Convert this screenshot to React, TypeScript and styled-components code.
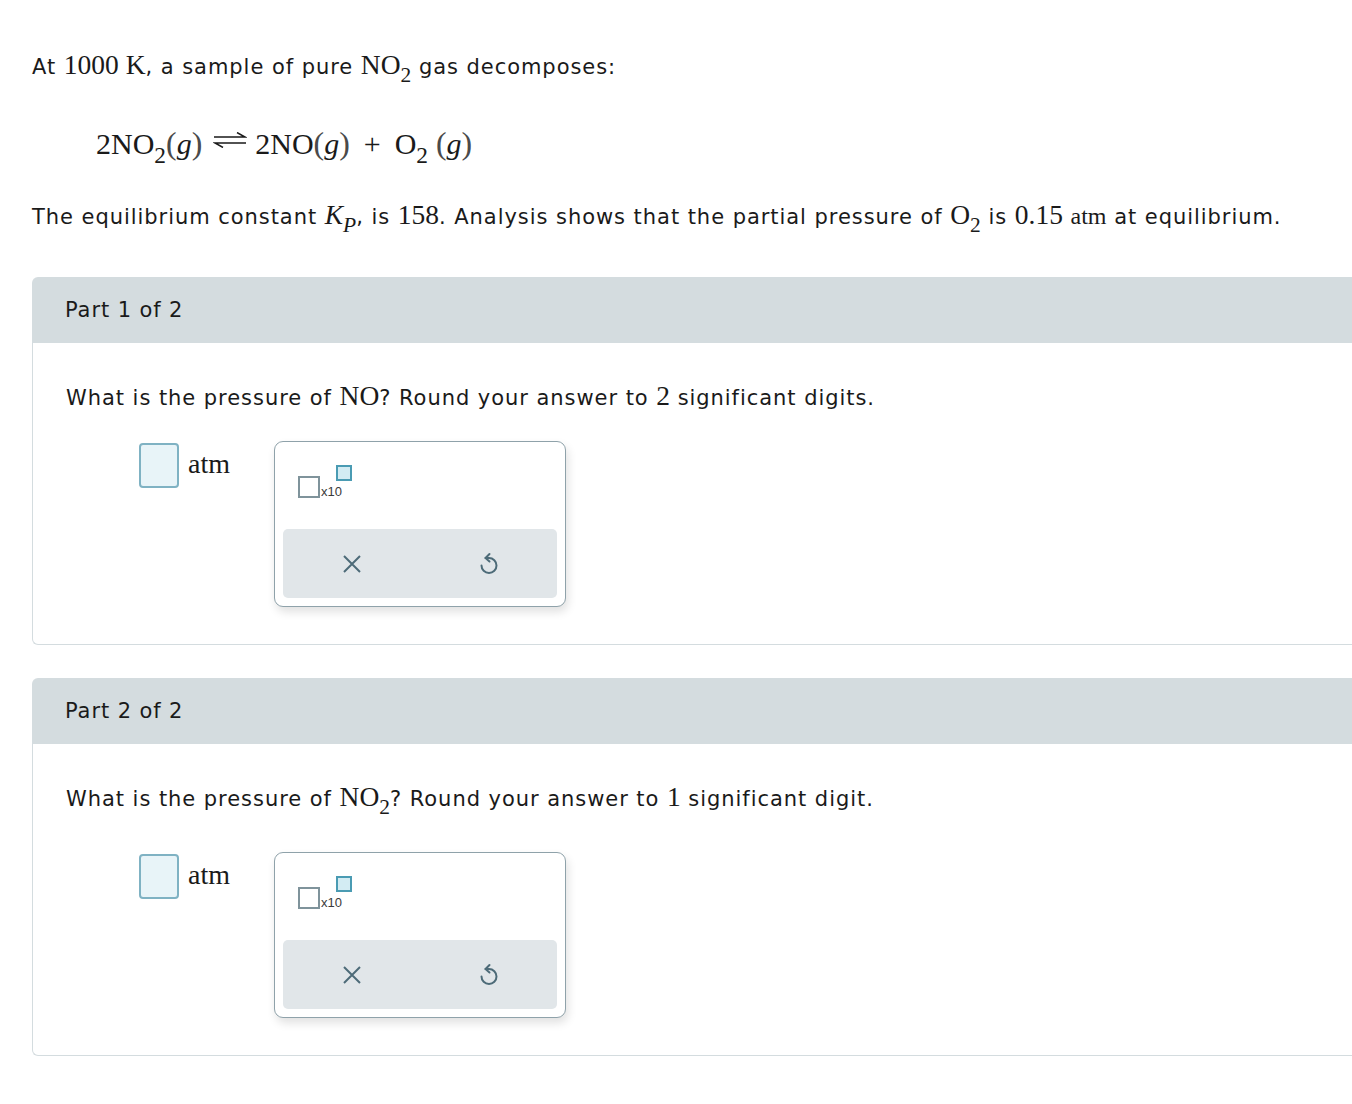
import * as React from 'react';
import styled, { createGlobalStyle } from 'styled-components';

const GlobalStyle = createGlobalStyle`
  html, body {
    margin: 0;
    padding: 0;
    background: #ffffff;
    overflow: hidden;
  }
  body {
    font-family: "DejaVu Sans", Verdana, sans-serif;
    color: #1a1a1a;
  }
`;

const Page = styled.div`
  padding: 45px 0 0 32px;
  width: 1360px;
  box-sizing: border-box;
`;

const Line = styled.p`
  margin: 0;
  font-size: 21px;
  line-height: 40px;
  letter-spacing: 0.95px;
`;

const Equation = styled.div`
  margin: 37px 0 0 64px;
  font-family: "Liberation Serif", "Times New Roman", serif;
  font-size: 30px;
  line-height: 40px;
  display: flex;
  align-items: baseline;
`;

const M = styled.span<{ $size?: number }>`
  font-family: "Liberation Serif", "Times New Roman", serif;
  font-size: ${(p) => p.$size ?? 27.5}px;
  letter-spacing: 0;
`;

const Sub = styled.sub`
  font-size: 0.78em;
  vertical-align: -0.38em;
  line-height: 0;
`;

const Ital = styled.i`
  font-style: italic;
`;

const Paren = styled.span`
  color: #4a4a4a;
  font-size: 1.06em;
`;

const Arrow = styled.svg`
  margin: 0 8px 0 11px;
  align-self: center;
  position: relative;
  top: -4px;
`;

const Plus = styled.span`
  margin: 0 14px;
`;

const Intro = styled(Line)`
  margin-top: 31px;
`;

const Part = styled.section`
  margin-top: 40px;
  & + & {
    margin-top: 33px;
  }
`;

const PartHeader = styled.div`
  height: 66px;
  background: #d4dcdf;
  border-top-left-radius: 6px;
  display: flex;
  align-items: center;
  padding-left: 33px;
  font-size: 21px;
  letter-spacing: 0.9px;
`;

const PartBody = styled.div`
  border-left: 1px solid #d4dcdf;
  border-bottom: 1px solid #d4dcdf;
  border-bottom-left-radius: 6px;
  padding: 33px 0 37px 33px;
`;

const Question = styled(Line)<{ $deep?: boolean }>`
  padding-bottom: ${(p) => (p.$deep ? 10 : 0)}px;
`;

const AnswerRow = styled.div`
  display: flex;
  align-items: flex-start;
  margin: 23px 0 0 73px;
`;

const AnswerBox = styled.div`
  width: 40px;
  height: 45px;
  box-sizing: border-box;
  margin-top: 2px;
  border: 2px solid #7fb2c3;
  border-radius: 4px;
  background: #e8f4f8;
`;

const Unit = styled.span`
  font-family: "Liberation Serif", "Times New Roman", serif;
  font-size: 28px;
  line-height: 1;
  margin: 9px 0 0 9px;
`;

const Palette = styled.div`
  margin-left: 44px;
  width: 292px;
  height: 166px;
  box-sizing: border-box;
  border: 1px solid #8fa2aa;
  border-radius: 9px;
  background: #fff;
  box-shadow: 2px 5px 10px rgba(0, 0, 0, 0.12);
  padding: 8px;
  display: flex;
  flex-direction: column;
`;

const Template = styled.div`
  height: 79px;
  display: flex;
  align-items: flex-start;
  padding: 15px 0 0 15px;
  box-sizing: border-box;
`;

const BaseBox = styled.span`
  width: 22px;
  height: 22px;
  box-sizing: border-box;
  border: 2px solid #7f939b;
  margin-top: 11px;
`;

const TenText = styled.span`
  font-family: "Liberation Sans", Arial, sans-serif;
  font-size: 13px;
  color: #3a3a3a;
  margin: 19px 0 0 1px;
`;

const ExpBox = styled.span`
  width: 16px;
  height: 16px;
  box-sizing: border-box;
  border: 2px solid #4a9bb3;
  background: #d3ecf3;
  margin-left: -6px;
`;

const Actions = styled.div`
  flex: 1;
  background: #e1e6e9;
  border-radius: 5px;
  display: grid;
  grid-template-columns: 1fr 1fr;
  align-items: center;
  justify-items: center;
`;

const IconBtn = styled.span`
  display: flex;
  color: #4d6b78;
`;

const ClearIcon = () => (
  <svg width="22" height="22" viewBox="0 0 22 22" fill="none" stroke="currentColor" strokeWidth="2">
    <path d="M3 3 L19 19 M19 3 L3 19" />
  </svg>
);

const UndoIcon = () => (
  <svg width="26" height="26" viewBox="0 0 26 26" fill="none" stroke="currentColor" strokeWidth="2" strokeLinecap="round" strokeLinejoin="round">
    <path d="M13.5 3 L9.5 7 L13.5 10.5" />
    <path d="M9.5 7 H13 A7.5 7.5 0 1 1 5.5 14.5" />
  </svg>
);

const Equilibrium = () => (
  <Arrow width="34" height="16" viewBox="0 0 34 16" fill="none" stroke="#1a1a1a" strokeWidth="1.5">
    <path d="M1 5 H32 L24 0.5" />
    <path d="M33 11 H2 L10 15.5" />
  </Arrow>
);

const AnswerInput: React.FC = () => (
  <AnswerRow>
    <AnswerBox />
    <Unit>atm</Unit>
    <Palette>
      <Template>
        <BaseBox />
        <TenText>x10</TenText>
        <ExpBox />
      </Template>
      <Actions>
        <IconBtn>
          <ClearIcon />
        </IconBtn>
        <IconBtn>
          <UndoIcon />
        </IconBtn>
      </Actions>
    </Palette>
  </AnswerRow>
);

const App: React.FC = () => (
  <Page>
    <GlobalStyle />
    <Line>
      At <M>1000 K</M>, a sample of pure <M>NO<Sub>2</Sub></M> gas decomposes:
    </Line>
    <Equation>
      <span>2NO<Sub>2</Sub></span>
      <Paren>(</Paren><Ital>g</Ital><Paren>)</Paren>
      <Equilibrium />
      <span>2NO</span>
      <Paren>(</Paren><Ital>g</Ital><Paren>)</Paren>
      <Plus>+</Plus>
      <span>O<Sub>2</Sub></span>
      <Paren>&nbsp;(</Paren><Ital>g</Ital><Paren>)</Paren>
    </Equation>
    <Intro>
      The equilibrium constant <M><Ital>K</Ital><Sub><Ital>P</Ital></Sub></M>, is <M>158</M>. Analysis shows that the
      partial pressure of <M>O<Sub>2</Sub></M> is <M>0.15</M> <M $size={24}>atm</M> at equilibrium.
    </Intro>

    <Part>
      <PartHeader>Part 1 of 2</PartHeader>
      <PartBody>
        <Question>
          What is the pressure of <M>NO</M>? Round your answer to <M>2</M> significant digits.
        </Question>
        <AnswerInput />
      </PartBody>
    </Part>

    <Part>
      <PartHeader>Part 2 of 2</PartHeader>
      <PartBody>
        <Question $deep>
          What is the pressure of <M>NO<Sub>2</Sub></M>? Round your answer to <M>1</M> significant digit.
        </Question>
        <AnswerInput />
      </PartBody>
    </Part>
  </Page>
);

export default App;
